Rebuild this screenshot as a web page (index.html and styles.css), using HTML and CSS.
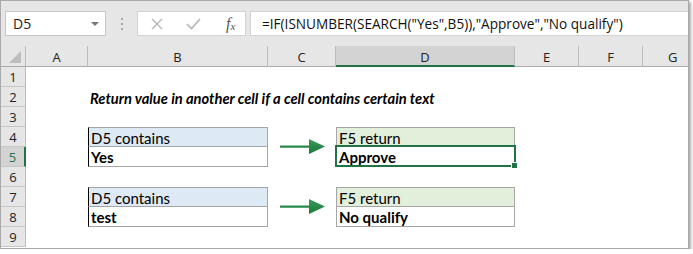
FILE: index.html
```html
<!DOCTYPE html>
<html lang="en">
<head>
  <meta charset="UTF-8" />
  <title>Return value if a cell contains certain text</title>
  <link rel="stylesheet" href="styles.css">
</head>
<body>
  <div class="window">
    <!-- formula bar -->
    <div class="toolbar">
      <div class="namebox">
        <span>D5</span>
        <svg class="caret" width="8" height="4" viewBox="0 0 8 4"><path d="M0 0h8L4 4z" fill="#777"/></svg>
      </div>
      <div class="grip"><i></i><i></i><i></i></div>
      <div class="fnbox">
        <svg width="12" height="12" viewBox="0 0 12 12"><path d="M1 1l10 10M11 1L1 11" stroke="#b5b5b5" stroke-width="1.4" fill="none"/></svg>
        <svg width="15" height="12" viewBox="0 0 15 12"><path d="M1 6l4.5 4.5L14 1" stroke="#b5b5b5" stroke-width="1.6" fill="none"/></svg>
        <span class="fx">f<sub>x</sub></span>
      </div>
      <div class="formula">=IF(ISNUMBER(SEARCH("Yes",B5)),"Approve","No qualify")</div>
    </div>

    <!-- sheet -->
    <div class="sheet">
      <div class="corner"></div>
      <div class="colhead">A</div>
      <div class="colhead">B</div>
      <div class="colhead">C</div>
      <div class="colhead active">D</div>
      <div class="colhead">E</div>
      <div class="colhead">F</div>
      <div class="colhead last">G</div>

      <div class="rowhead r1">1</div>
      <div class="rowhead r2">2</div>
      <div class="rowhead r3">3</div>
      <div class="rowhead r4">4</div>
      <div class="rowhead r5 active">5</div>
      <div class="rowhead r6">6</div>
      <div class="rowhead r7">7</div>
      <div class="rowhead r8">8</div>
      <div class="rowhead r9">9</div>

      <div class="title">Return value in another cell if a cell contains certain text</div>

      <div class="cell label blue b r4">D5 contains</div>
      <div class="cell value b r5">Yes</div>
      <div class="arrow r45">
        <svg width="46" height="16" viewBox="0 0 46 16">
          <defs>
            <linearGradient id="g1" x1="0" y1="0" x2="0" y2="1">
              <stop offset="0" stop-color="#3d9a5c"/>
              <stop offset="1" stop-color="#16793a"/>
            </linearGradient>
          </defs>
          <path d="M0 6.5h29V0l16 7.5L29 15V8.8H0z" fill="url(#g1)"/>
        </svg>
      </div>
      <div class="cell label green d r4">F5 return</div>
      <div class="cell value d r5 selected">Approve<span class="handle"></span></div>

      <div class="cell label blue b r7">D5 contains</div>
      <div class="cell value b r8">test</div>
      <div class="arrow r78">
        <svg width="46" height="16" viewBox="0 0 46 16">
          <path d="M0 6.5h29V0l16 7.5L29 15V8.8H0z" fill="url(#g1)"/>
        </svg>
      </div>
      <div class="cell label green d r7">F5 return</div>
      <div class="cell value d r8">No qualify</div>
    </div>
  </div>
</body>
</html>
```

FILE: styles.css
```css
body {
  margin: 0;
  background: #fff;
  font-family: "Open Sans", "Liberation Sans", sans-serif;
}
.window {
  width: 689px;
  height: 249px;
  border: 1px solid #a9a9a9;
  box-sizing: border-box;
  box-shadow: 2px 2px 3px rgba(0, 0, 0, 0.35);
  background: #fff;
  overflow: hidden;
}

/* formula bar */
.toolbar {
  height: 45px;
  background: #e6e6e6;
  display: flex;
  align-items: flex-start;
  padding: 10px 0 0 4px;
  box-sizing: border-box;
}
.namebox {
  width: 101px;
  height: 25px;
  background: #fff;
  border: 1px solid #c6c6c6;
  box-sizing: border-box;
  display: flex;
  align-items: center;
  justify-content: space-between;
  padding: 0 6px 0 7px;
  font-size: 14px;
  color: #222;
}
.grip {
  width: 31px;
  height: 25px;
  display: flex;
  flex-direction: column;
  align-items: center;
  justify-content: center;
  gap: 3px;
}
.grip i {
  width: 2px;
  height: 2px;
  background: #a8a8a8;
}
.fnbox {
  width: 109px;
  height: 25px;
  background: #fff;
  border: 1px solid #d4d4d4;
  box-sizing: border-box;
  display: flex;
  align-items: center;
  padding: 0 0 0 13px;
  gap: 23px;
}
.fx {
  font-family: "Liberation Serif", serif;
  font-style: italic;
  font-size: 16px;
  color: #555;
  margin-left: 2px;
}
.fx sub {
  font-size: 11px;
  vertical-align: -1px;
}
.formula {
  flex: 1;
  height: 25px;
  margin-left: 4px;
  background: #fff;
  border: 1px solid #d4d4d4;
  border-right: none;
  box-sizing: border-box;
  padding-left: 11px;
  font-size: 13.6px;
  line-height: 23px;
  color: #111;
  white-space: nowrap;
}

/* grid */
.sheet {
  display: grid;
  grid-template-columns: 25px 62px 180px 68px 179px 64px 64px 1fr;
  grid-template-rows: 21px repeat(9, 20px);
  font-family: "Lato", "Liberation Sans", sans-serif;
  font-size: 15px;
  color: #000;
}
.corner {
  background: #e6e6e6;
  border-right: 1px solid #bcbcbc;
  border-bottom: 1px solid #ababab;
  position: relative;
}
.corner::after {
  content: "";
  position: absolute;
  right: 4px;
  bottom: 3px;
  border-left: 12px solid transparent;
  border-bottom: 12px solid #bdbdbd;
}
.colhead {
  background: #e6e6e6;
  border-right: 1px solid #bcbcbc;
  border-bottom: 1px solid #ababab;
  text-align: center;
  font-family: "Open Sans", sans-serif;
  font-size: 13px;
  line-height: 22px;
  color: #222;
}
.colhead.active {
  background: #d3d3d3;
  border-bottom: 2px solid #217346;
}
.colhead.last {
  border-right: none;
  text-align: left;
  padding-left: 25px;
}
.rowhead {
  grid-column: 1;
  background: #e6e6e6;
  border-right: 1px solid #bcbcbc;
  border-bottom: 1px solid #c6c6c6;
  text-align: center;
  font-family: "Open Sans", sans-serif;
  font-size: 13px;
  line-height: 20px;
  color: #222;
}
.rowhead.active {
  background: #d3d3d3;
  border-right: 2px solid #217346;
  color: #217346;
}
.r1 { grid-row: 2; }
.r2 { grid-row: 3; }
.r3 { grid-row: 4; }
.r4 { grid-row: 5; }
.r5 { grid-row: 6; }
.r6 { grid-row: 7; }
.r7 { grid-row: 8; }
.r8 { grid-row: 9; }
.r9 { grid-row: 10; }

.title {
  grid-row: 3;
  grid-column: 3 / 7;
  padding-left: 2px;
  font-weight: bold;
  font-style: italic;
  font-size: 14.7px;
  line-height: 22px;
  white-space: nowrap;
}
.cell {
  box-sizing: border-box;
  padding-left: 2px;
  line-height: 20px;
  white-space: nowrap;
  border: 1px solid #a6a6a6;
}
.cell.b {
  grid-column: 3;
  border-left-color: #000;
}
.cell.d {
  grid-column: 5;
}
.cell.value {
  border-top: none;
  font-weight: bold;
}
.cell.blue { background: #dde9f5; }
.cell.green { background: #e2efda; }

.selected {
  position: relative;
}
.selected::before {
  content: "";
  position: absolute;
  left: -2px;
  top: -2px;
  right: -2px;
  bottom: -1px;
  border: 2px solid #217346;
}
.handle {
  position: absolute;
  right: -4px;
  bottom: -3px;
  width: 5px;
  height: 5px;
  background: #217346;
  border: 1px solid #fff;
}
.arrow {
  grid-column: 4;
  display: flex;
  align-items: center;
  padding-left: 12px;
}
.arrow.r45 { grid-row: 5 / 7; }
.arrow.r78 { grid-row: 8 / 10; }
```
